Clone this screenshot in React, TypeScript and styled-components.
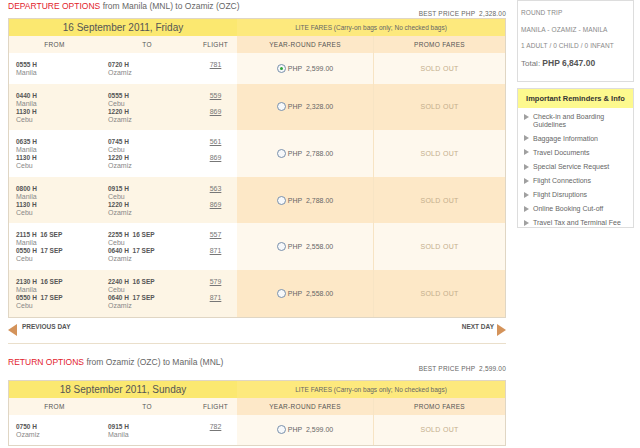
import React from "react";
import styled, { createGlobalStyle } from "styled-components";

type Leg = {
  dep: string;
  depCity: string;
  arr: string;
  arrCity: string;
  flight: string;
};

type FlightOption = {
  legs: Leg[];
  price: string;
  selected?: boolean;
};

const departures: FlightOption[] = [
  {
    legs: [{ dep: "0555 H", depCity: "Manila", arr: "0720 H", arrCity: "Ozamiz", flight: "781" }],
    price: "2,599.00",
    selected: true,
  },
  {
    legs: [
      { dep: "0440 H", depCity: "Manila", arr: "0555 H", arrCity: "Cebu", flight: "559" },
      { dep: "1130 H", depCity: "Cebu", arr: "1220 H", arrCity: "Ozamiz", flight: "869" },
    ],
    price: "2,328.00",
  },
  {
    legs: [
      { dep: "0635 H", depCity: "Manila", arr: "0745 H", arrCity: "Cebu", flight: "561" },
      { dep: "1130 H", depCity: "Cebu", arr: "1220 H", arrCity: "Ozamiz", flight: "869" },
    ],
    price: "2,788.00",
  },
  {
    legs: [
      { dep: "0800 H", depCity: "Manila", arr: "0915 H", arrCity: "Cebu", flight: "563" },
      { dep: "1130 H", depCity: "Cebu", arr: "1220 H", arrCity: "Ozamiz", flight: "869" },
    ],
    price: "2,788.00",
  },
  {
    legs: [
      { dep: "2115 H  16 SEP", depCity: "Manila", arr: "2255 H  16 SEP", arrCity: "Cebu", flight: "557" },
      { dep: "0550 H  17 SEP", depCity: "Cebu", arr: "0640 H  17 SEP", arrCity: "Ozamiz", flight: "871" },
    ],
    price: "2,558.00",
  },
  {
    legs: [
      { dep: "2130 H  16 SEP", depCity: "Manila", arr: "2240 H  16 SEP", arrCity: "Cebu", flight: "579" },
      { dep: "0550 H  17 SEP", depCity: "Cebu", arr: "0640 H  17 SEP", arrCity: "Ozamiz", flight: "871" },
    ],
    price: "2,558.00",
  },
];

const returns: FlightOption[] = [
  {
    legs: [{ dep: "0750 H", depCity: "Ozamiz", arr: "0915 H", arrCity: "Manila", flight: "782" }],
    price: "2,599.00",
  },
];

const reminders = [
  "Check-in and Boarding Guidelines",
  "Baggage Information",
  "Travel Documents",
  "Special Service Request",
  "Flight Connections",
  "Flight Disruptions",
  "Online Booking Cut-off",
  "Travel Tax and Terminal Fee",
];

const GlobalStyle = createGlobalStyle`
  html, body {
    margin: 0;
    padding: 0;
    background: #fff;
  }
  body {
    font-family: "Liberation Sans", Arial, sans-serif;
    color: #555;
  }
`;

const COLUMNS = "91px 94px 43px 136px 132px";

const Page = styled.div`
  display: flex;
  align-items: flex-start;
  width: 640px;
  height: 448px;
  padding-left: 8px;
  box-sizing: border-box;
  overflow: hidden;
`;

const Main = styled.div`
  width: 498px;
  flex-shrink: 0;
`;

const SectionHead = styled.div<{ $height: number; $top?: number }>`
  display: flex;
  justify-content: space-between;
  height: ${(p) => p.$height}px;
  margin-top: ${(p) => p.$top ?? 0}px;
`;

const Title = styled.div`
  align-self: flex-start;
  font-size: 8.5px;
  line-height: 13px;
  color: #666;
  white-space: nowrap;
`;

const Accent = styled.span`
  color: #e2222c;
`;

const BestPrice = styled.div<{ $bottom?: number }>`
  align-self: flex-end;
  margin-bottom: ${(p) => p.$bottom ?? 0}px;
  font-size: 6.5px;
  line-height: 8px;
  letter-spacing: 0.2px;
  color: #666;
  white-space: pre;
`;

const Table = styled.div`
  border: 1px solid #e0d6c4;
  background: #fff;
`;

const GridRow = styled.div`
  display: grid;
  grid-template-columns: ${COLUMNS};
`;

const DateCell = styled.div`
  grid-column: span 3;
  background: #fbe870;
  font-size: 10px;
  line-height: 17px;
  text-align: center;
  color: #555;
`;

const LiteCell = styled.div`
  grid-column: span 2;
  background: #fde97d;
  font-size: 6.5px;
  line-height: 17px;
  text-align: center;
  color: #666;
`;

const HeadCell = styled.div<{ $fare?: boolean; $split?: boolean }>`
  background: ${(p) => (p.$fare ? "#fde8c8" : "#fef6e8")};
  border-left: ${(p) => (p.$split ? "1px solid #f7e4c4" : "none")};
  font-size: 6.5px;
  line-height: 17px;
  letter-spacing: 0.3px;
  text-align: center;
  color: #555;
`;

const InfoCell = styled.div<{ $bg: string; $pad?: number }>`
  background: ${(p) => p.$bg};
  padding: 8px 0 6.6px ${(p) => p.$pad ?? 0}px;
`;

const Leg = styled.div`
  height: 16px;
`;

const Time = styled.div`
  font-size: 6.5px;
  font-weight: bold;
  line-height: 8px;
  color: #555;
  white-space: pre;
`;

const City = styled.div`
  font-size: 7px;
  line-height: 8px;
  color: #888;
`;

const FlightNo = styled.div`
  height: 16px;
  font-size: 7px;
  line-height: 8px;
  text-align: center;
  text-decoration: underline;
  color: #777;
`;

const FareCell = styled.div<{ $bg: string; $split?: boolean }>`
  display: flex;
  align-items: center;
  justify-content: center;
  background: ${(p) => p.$bg};
  border-left: ${(p) => (p.$split ? "1px solid #f7e4c4" : "none")};
`;

const Radio = styled.span<{ $checked?: boolean }>`
  position: relative;
  width: 7px;
  height: 7px;
  margin-right: 2px;
  border: 1px solid #7990ab;
  border-radius: 50%;
  background: #f6f8fa;

  &::after {
    content: "";
    display: ${(p) => (p.$checked ? "block" : "none")};
    position: absolute;
    top: 2px;
    left: 2px;
    width: 3px;
    height: 3px;
    border-radius: 50%;
    background: #2ea43a;
  }
`;

const Price = styled.span`
  font-size: 7px;
  color: #666;
  white-space: pre;
`;

const SoldOut = styled.span`
  font-size: 7px;
  letter-spacing: 0.3px;
  color: #c4ae8c;
`;

const Nav = styled.div`
  display: flex;
  justify-content: space-between;
  height: 26px;
  padding-top: 5px;
  box-sizing: border-box;
  border-bottom: 1px solid #eadfcb;
`;

const NavLink = styled.div<{ $gap: number }>`
  display: flex;
  align-items: flex-start;
  gap: ${(p) => p.$gap}px;
  font-size: 6.5px;
  font-weight: bold;
  line-height: 7px;
  color: #555;
`;

const Arrow = styled.span<{ $dir: "left" | "right" }>`
  margin-top: 1px;
  width: 0;
  height: 0;
  border-top: 6.5px solid transparent;
  border-bottom: 6.5px solid transparent;
  ${(p) => (p.$dir === "left" ? "border-right" : "border-left")}: 9px solid #d4935a;
`;

const Sidebar = styled.aside`
  width: 117px;
  margin-left: 11px;
  flex-shrink: 0;
`;

const SummaryBox = styled.div`
  height: 82px;
  padding: 4px 3px 0;
  box-sizing: border-box;
  border: 1px solid #ddd;
`;

const SummaryLine = styled.div`
  font-size: 6.5px;
  line-height: 16.5px;
  letter-spacing: 0.1px;
  color: #888;
  white-space: nowrap;
`;

const TotalLine = styled.div`
  font-size: 8px;
  line-height: 16.5px;
  color: #777;
  white-space: nowrap;
`;

const TotalAmount = styled.strong`
  font-size: 8.5px;
  color: #555;
`;

const ReminderBox = styled.div`
  height: 140px;
  margin-top: 6px;
  box-sizing: border-box;
  border: 1px solid #ddd;
  overflow: hidden;
`;

const ReminderHead = styled.div`
  height: 19px;
  background: #fdf98e;
  font-size: 7.5px;
  font-weight: bold;
  line-height: 19px;
  text-align: center;
  color: #333;
`;

const ReminderList = styled.ul`
  list-style: none;
  margin: 0;
  padding: 2px 4px 0 6px;
`;

const ReminderItem = styled.li`
  display: flex;
  gap: 4px;
  padding: 3.3px 0;
  font-size: 7px;
  line-height: 7.5px;
  color: #666;
`;

const Bullet = styled.span`
  flex-shrink: 0;
  margin-top: 0.5px;
  width: 0;
  height: 0;
  border-top: 3.3px solid transparent;
  border-bottom: 3.3px solid transparent;
  border-left: 5px solid #a0a0a0;
`;

const OptionRow = ({ option, index }: { option: FlightOption; index: number }) => {
  const dark = index % 2 === 1;
  const infoBg = dark ? "#fdf5e5" : "#ffffff";
  const fareBg = dark ? "#fde8c7" : "#fef8ed";
  return (
    <GridRow>
      <InfoCell $bg={infoBg} $pad={7}>
        {option.legs.map((leg, i) => (
          <Leg key={i}>
            <Time>{leg.dep}</Time>
            <City>{leg.depCity}</City>
          </Leg>
        ))}
      </InfoCell>
      <InfoCell $bg={infoBg} $pad={8}>
        {option.legs.map((leg, i) => (
          <Leg key={i}>
            <Time>{leg.arr}</Time>
            <City>{leg.arrCity}</City>
          </Leg>
        ))}
      </InfoCell>
      <InfoCell $bg={infoBg}>
        {option.legs.map((leg, i) => (
          <FlightNo key={i}>{leg.flight}</FlightNo>
        ))}
      </InfoCell>
      <FareCell $bg={fareBg}>
        <Radio $checked={option.selected} />
        <Price>{`PHP  ${option.price}`}</Price>
      </FareCell>
      <FareCell $bg={fareBg} $split>
        <SoldOut>SOLD OUT</SoldOut>
      </FareCell>
    </GridRow>
  );
};

const FareTable = ({ date, options }: { date: string; options: FlightOption[] }) => (
  <Table>
    <GridRow>
      <DateCell>{date}</DateCell>
      <LiteCell>LITE FARES (Carry-on bags only; No checked bags)</LiteCell>
    </GridRow>
    <GridRow>
      <HeadCell>FROM</HeadCell>
      <HeadCell>TO</HeadCell>
      <HeadCell>FLIGHT</HeadCell>
      <HeadCell $fare>YEAR-ROUND FARES</HeadCell>
      <HeadCell $fare $split>PROMO FARES</HeadCell>
    </GridRow>
    {options.map((option, i) => (
      <OptionRow key={i} option={option} index={i} />
    ))}
  </Table>
);

export default function App() {
  return (
    <>
      <GlobalStyle />
      <Page>
        <Main>
          <SectionHead $height={18}>
            <Title>
              <Accent>DEPARTURE OPTIONS</Accent> from Manila (MNL) to Ozamiz (OZC)
            </Title>
            <BestPrice>{"BEST PRICE PHP  2,328.00"}</BestPrice>
          </SectionHead>
          <FareTable date="16 September 2011, Friday" options={departures} />
          <Nav>
            <NavLink $gap={5}>
              <Arrow $dir="left" />
              PREVIOUS DAY
            </NavLink>
            <NavLink $gap={3}>
              NEXT DAY
              <Arrow $dir="right" />
            </NavLink>
          </Nav>
          <SectionHead $height={24} $top={12}>
            <Title>
              <Accent>RETURN OPTIONS</Accent> from Ozamiz (OZC) to Manila (MNL)
            </Title>
            <BestPrice $bottom={7}>{"BEST PRICE PHP  2,599.00"}</BestPrice>
          </SectionHead>
          <FareTable date="18 September 2011, Sunday" options={returns} />
        </Main>
        <Sidebar>
          <SummaryBox>
            <SummaryLine>ROUND TRIP</SummaryLine>
            <SummaryLine>MANILA - OZAMIZ - MANILA</SummaryLine>
            <SummaryLine>1 ADULT / 0 CHILD / 0 INFANT</SummaryLine>
            <TotalLine>
              Total: <TotalAmount>PHP 6,847.00</TotalAmount>
            </TotalLine>
          </SummaryBox>
          <ReminderBox>
            <ReminderHead>Important Reminders &amp; Info</ReminderHead>
            <ReminderList>
              {reminders.map((item) => (
                <ReminderItem key={item}>
                  <Bullet />
                  <span>{item}</span>
                </ReminderItem>
              ))}
            </ReminderList>
          </ReminderBox>
        </Sidebar>
      </Page>
    </>
  );
}
